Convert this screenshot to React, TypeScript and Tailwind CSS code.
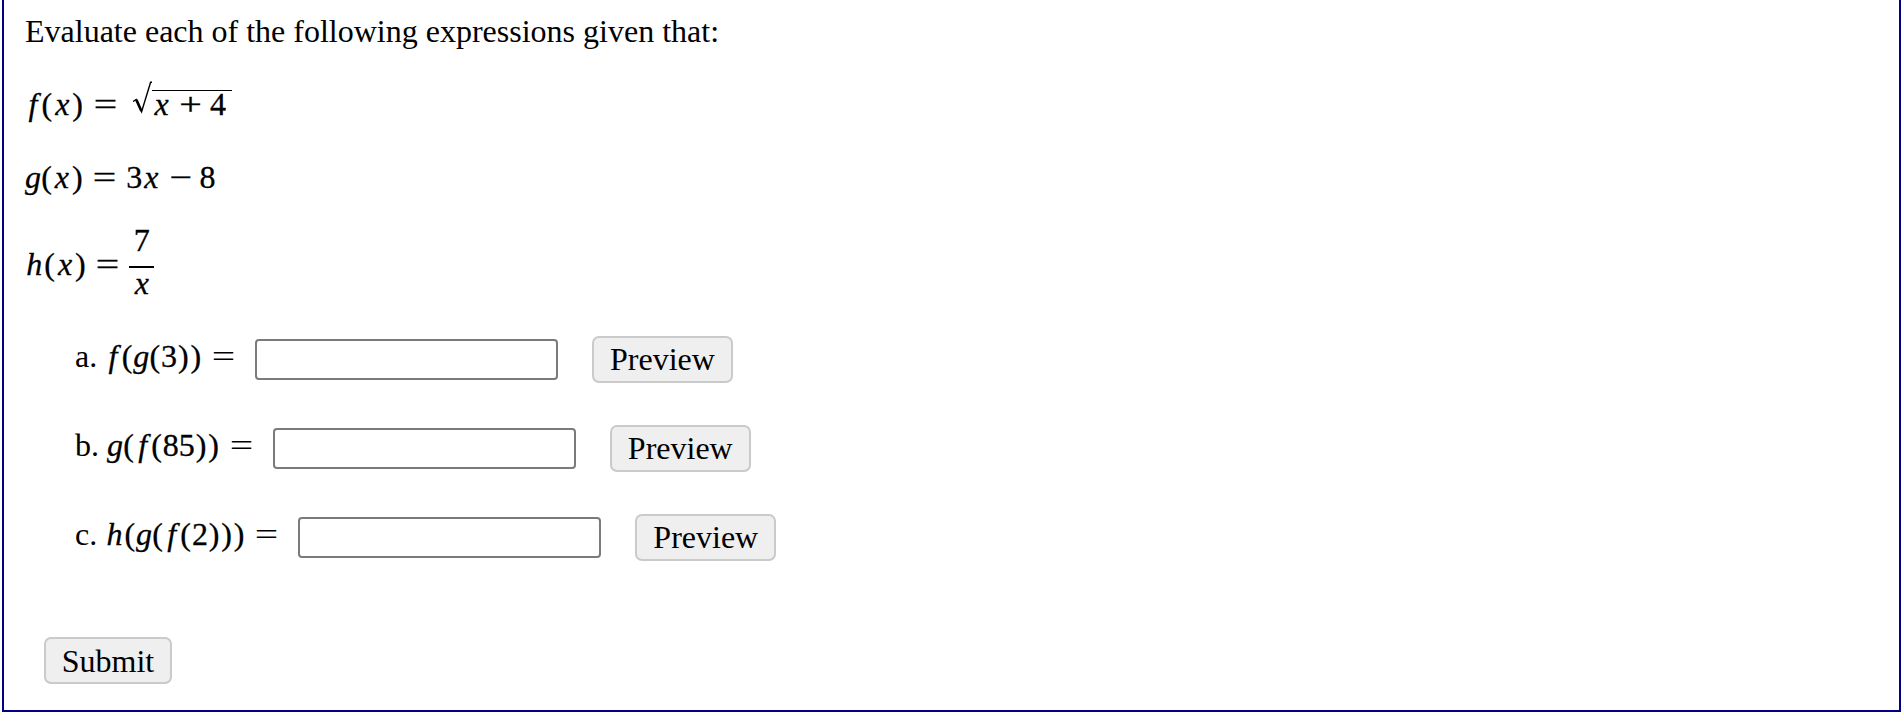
import React from "react";

const Tok = ({ w, it, children }: { w: string; it?: boolean; children: React.ReactNode }) => (
  <span className={`inline-block text-center ${it ? "italic" : ""} ${w}`}>{children}</span>
);

const F = () => <Tok w="w-[15.7px]" it>f</Tok>;
const G = () => <Tok w="w-[15.3px]" it>g</Tok>;
const H = () => <Tok w="w-[18.4px]" it>h</Tok>;
const X = () => <Tok w="w-[18.3px]" it>x</Tok>;
const LP = () => <Tok w="w-[12.45px]">(</Tok>;
const RP = () => <Tok w="w-[12.45px]">)</Tok>;
const D = ({ d }: { d: string }) => <Tok w="w-[16px]">{d}</Tok>;
const Eq = () => <span className="inline-block w-[24.9px] mx-[8.9px] text-center scale-x-[1.3]">=</span>;
const Bin = ({ c }: { c: string }) => <span className="inline-block w-[24.9px] mx-[7.1px] text-center scale-x-[1.25]">{c}</span>;

const Sqrt = ({ children }: { children: React.ReactNode }) => (
  <span className="inline-flex items-baseline">
    <svg width="20" height="34" viewBox="0 0 20 34" className="ml-[5px] mb-[-8px]">
      <path d="M1 20.5 L4.2 18.6 L9.6 30.8 L18.6 1.2 L20 1.2" fill="none" stroke="black" strokeWidth="1.4" strokeLinejoin="miter" />
      <path d="M4.4 18.9 L9.4 30" fill="none" stroke="black" strokeWidth="2.6" />
    </svg>
    <span className="inline-flex items-baseline leading-[26px] border-t-[1.5px] border-black pl-[1px] pr-[6px]">{children}</span>
  </span>
);

const Row = ({ label, children, mt }: { label: string; children: React.ReactNode; mt: string }) => (
  <div className={`flex items-center h-[47px] pl-[50px] ${mt}`}>
    <div className="flex items-baseline leading-[36px] mb-[7px]">
      <span>{label}</span>
      <span className="inline-flex items-baseline ml-[8px] [-webkit-text-stroke:0.3px_black]">{children}</span>
      <Eq />
    </div>
    <input type="text" className="ml-[10.4px] w-[303px] h-[41px] border-2 border-[#7b7b7b] rounded-[4px] bg-white outline-none" />
    <button className="ml-[34px] w-[141px] h-[47px] border-2 border-[#cacaca] rounded-[7px] bg-[#efefef] text-black leading-none">
      Preview
    </button>
  </div>
);

export default function App() {
  return (
    <div className="bg-white min-h-[712px] font-['Liberation_Serif','Times_New_Roman',serif] text-[32px] text-black">
      <div className="ml-[2px] w-[1899px] border-l-2 border-r-2 border-b-2 border-[#000080] pl-[21px] pt-[13px] pb-[25px]">
        <div className="h-[36px] leading-[36px]">Evaluate each of the following expressions given that:</div>

        <div className="mt-[32px] h-[36px] flex items-baseline leading-[36px] [-webkit-text-stroke:0.3px_black]">
          <F /><LP /><X /><RP />
          <Eq />
          <Sqrt>
            <X />
            <Bin c="+" />
            <D d="4" />
          </Sqrt>
        </div>

        <div className="mt-[42px] h-[36px] flex items-baseline leading-[36px] [-webkit-text-stroke:0.3px_black]">
          <G /><LP /><X /><RP />
          <Eq />
          <D d="3" /><X />
          <Bin c="−" />
          <D d="8" />
        </div>

        <div className="mt-[30px] flex items-center [-webkit-text-stroke:0.3px_black]">
          <div className="flex items-baseline leading-[36px] mb-[6px]">
            <H /><LP /><X /><RP />
            <Eq />
          </div>
          <div className="flex flex-col items-center w-[25px]">
            <div className="h-[41px] leading-[30px] text-center">7</div>
            <div className="h-[1.5px] w-[25px] bg-black" />
            <div className="h-[41px] leading-[30px] text-center italic">x</div>
          </div>
        </div>

        <Row label="a." mt="mt-[27px]">
          <F /><LP /><G /><LP /><D d="3" /><RP /><RP />
        </Row>
        <Row label="b." mt="mt-[42px]">
          <G /><LP /><F /><LP /><D d="8" /><D d="5" /><RP /><RP />
        </Row>
        <Row label="c." mt="mt-[42px]">
          <H /><LP /><G /><LP /><F /><LP /><D d="2" /><RP /><RP /><RP />
        </Row>

        <div className="mt-[76px] pl-[19px]">
          <button className="w-[128px] h-[47px] border-2 border-[#cacaca] rounded-[7px] bg-[#efefef] text-black leading-none">
            Submit
          </button>
        </div>
      </div>
    </div>
  );
}
